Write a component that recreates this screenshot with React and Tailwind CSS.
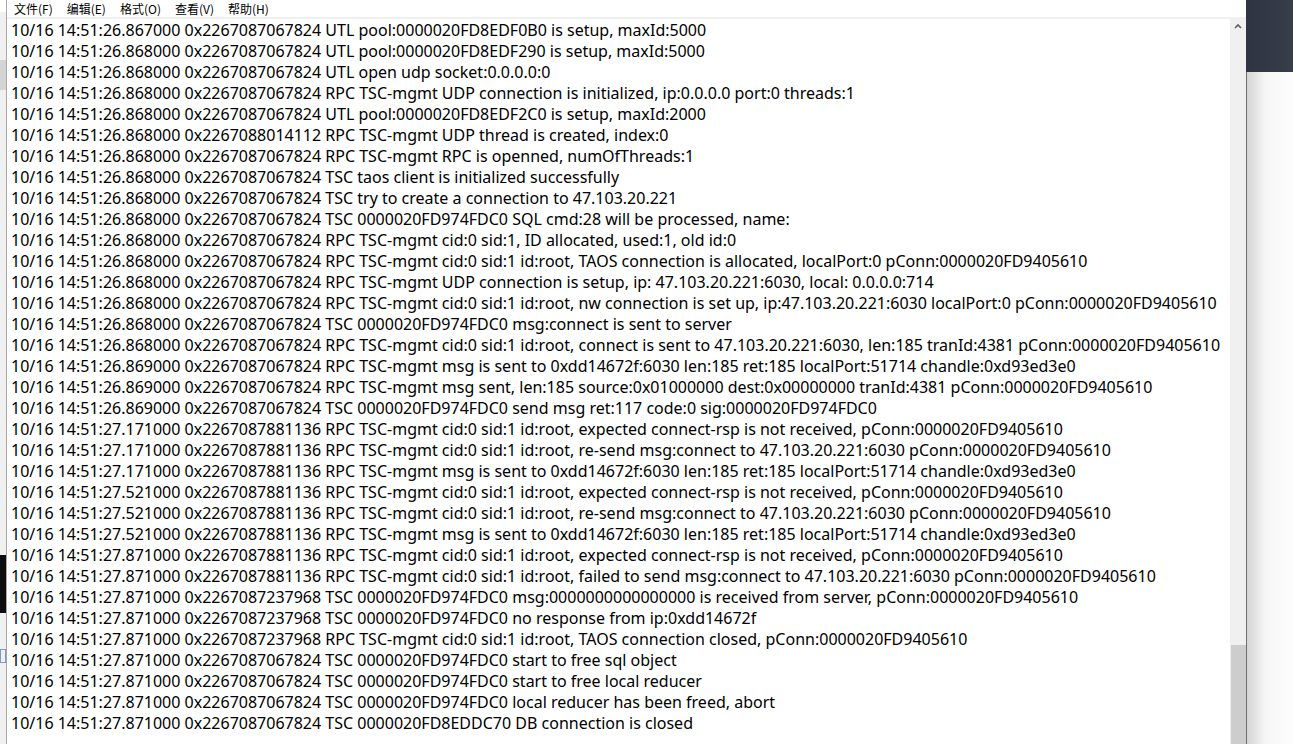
const lines = [
  '10/16 14:51:26.867000 0x2267087067824 UTL pool:0000020FD8EDF0B0 is setup, maxId:5000',
  '10/16 14:51:26.868000 0x2267087067824 UTL pool:0000020FD8EDF290 is setup, maxId:5000',
  '10/16 14:51:26.868000 0x2267087067824 UTL open udp socket:0.0.0.0:0',
  '10/16 14:51:26.868000 0x2267087067824 RPC TSC-mgmt UDP connection is initialized, ip:0.0.0.0 port:0 threads:1',
  '10/16 14:51:26.868000 0x2267087067824 UTL pool:0000020FD8EDF2C0 is setup, maxId:2000',
  '10/16 14:51:26.868000 0x2267088014112 RPC TSC-mgmt UDP thread is created, index:0',
  '10/16 14:51:26.868000 0x2267087067824 RPC TSC-mgmt RPC is openned, numOfThreads:1',
  '10/16 14:51:26.868000 0x2267087067824 TSC taos client is initialized successfully',
  '10/16 14:51:26.868000 0x2267087067824 TSC try to create a connection to 47.103.20.221',
  '10/16 14:51:26.868000 0x2267087067824 TSC 0000020FD974FDC0 SQL cmd:28 will be processed, name:',
  '10/16 14:51:26.868000 0x2267087067824 RPC TSC-mgmt cid:0 sid:1, ID allocated, used:1, old id:0',
  '10/16 14:51:26.868000 0x2267087067824 RPC TSC-mgmt cid:0 sid:1 id:root, TAOS connection is allocated, localPort:0 pConn:0000020FD9405610',
  '10/16 14:51:26.868000 0x2267087067824 RPC TSC-mgmt UDP connection is setup, ip: 47.103.20.221:6030, local: 0.0.0.0:714',
  '10/16 14:51:26.868000 0x2267087067824 RPC TSC-mgmt cid:0 sid:1 id:root, nw connection is set up, ip:47.103.20.221:6030 localPort:0 pConn:0000020FD9405610',
  '10/16 14:51:26.868000 0x2267087067824 TSC 0000020FD974FDC0 msg:connect is sent to server',
  '10/16 14:51:26.868000 0x2267087067824 RPC TSC-mgmt cid:0 sid:1 id:root, connect is sent to 47.103.20.221:6030, len:185 tranId:4381 pConn:0000020FD9405610',
  '10/16 14:51:26.869000 0x2267087067824 RPC TSC-mgmt msg is sent to 0xdd14672f:6030 len:185 ret:185 localPort:51714 chandle:0xd93ed3e0',
  '10/16 14:51:26.869000 0x2267087067824 RPC TSC-mgmt msg sent, len:185 source:0x01000000 dest:0x00000000 tranId:4381 pConn:0000020FD9405610',
  '10/16 14:51:26.869000 0x2267087067824 TSC 0000020FD974FDC0 send msg ret:117 code:0 sig:0000020FD974FDC0',
  '10/16 14:51:27.171000 0x2267087881136 RPC TSC-mgmt cid:0 sid:1 id:root, expected connect-rsp is not received, pConn:0000020FD9405610',
  '10/16 14:51:27.171000 0x2267087881136 RPC TSC-mgmt cid:0 sid:1 id:root, re-send msg:connect to 47.103.20.221:6030 pConn:0000020FD9405610',
  '10/16 14:51:27.171000 0x2267087881136 RPC TSC-mgmt msg is sent to 0xdd14672f:6030 len:185 ret:185 localPort:51714 chandle:0xd93ed3e0',
  '10/16 14:51:27.521000 0x2267087881136 RPC TSC-mgmt cid:0 sid:1 id:root, expected connect-rsp is not received, pConn:0000020FD9405610',
  '10/16 14:51:27.521000 0x2267087881136 RPC TSC-mgmt cid:0 sid:1 id:root, re-send msg:connect to 47.103.20.221:6030 pConn:0000020FD9405610',
  '10/16 14:51:27.521000 0x2267087881136 RPC TSC-mgmt msg is sent to 0xdd14672f:6030 len:185 ret:185 localPort:51714 chandle:0xd93ed3e0',
  '10/16 14:51:27.871000 0x2267087881136 RPC TSC-mgmt cid:0 sid:1 id:root, expected connect-rsp is not received, pConn:0000020FD9405610',
  '10/16 14:51:27.871000 0x2267087881136 RPC TSC-mgmt cid:0 sid:1 id:root, failed to send msg:connect to 47.103.20.221:6030 pConn:0000020FD9405610',
  '10/16 14:51:27.871000 0x2267087237968 TSC 0000020FD974FDC0 msg:0000000000000000 is received from server, pConn:0000020FD9405610',
  '10/16 14:51:27.871000 0x2267087237968 TSC 0000020FD974FDC0 no response from ip:0xdd14672f',
  '10/16 14:51:27.871000 0x2267087237968 RPC TSC-mgmt cid:0 sid:1 id:root, TAOS connection closed, pConn:0000020FD9405610',
  '10/16 14:51:27.871000 0x2267087067824 TSC 0000020FD974FDC0 start to free sql object',
  '10/16 14:51:27.871000 0x2267087067824 TSC 0000020FD974FDC0 start to free local reducer',
  '10/16 14:51:27.871000 0x2267087067824 TSC 0000020FD974FDC0 local reducer has been freed, abort',
  '10/16 14:51:27.871000 0x2267087067824 TSC 0000020FD8EDDC70 DB connection is closed',
]

const menus = ['文件(F)', '编辑(E)', '格式(O)', '查看(V)', '帮助(H)']

const App = () => (
  <div className="flex h-[744px] w-[1293px] overflow-hidden bg-white">
    {/* sliver of the window behind */}
    <div className="flex w-[7px] shrink-0 flex-col overflow-hidden border-r border-[#a8a8a8] bg-[#f0f0f0]">
      <div className="h-[12px] bg-white" />
      <div className="mt-[48px] h-[30px] bg-[#d4d4d4]" />
      <div className="mt-[465px] h-[58px] bg-[#0d0d0d]" />
      <div className="mt-[36px] h-[14px] w-[6px] border border-[#7a9cc4]" />
    </div>

    {/* notepad */}
    <div className="flex min-w-0 flex-1 flex-col">
      <div className="flex h-[17px] shrink-0 items-center gap-[14px] pl-[7px] font-['Noto_Sans_CJK_SC',sans-serif] text-[12px] leading-none text-black">
        {menus.map((m) => (
          <span key={m}>{m}</span>
        ))}
      </div>
      <div className="flex min-h-0 flex-1">
        <div className="min-w-0 flex-1 overflow-hidden border-t-2 border-[#f0f0f0] pl-[4px] pt-[1px] font-['Noto_Sans',sans-serif] text-[16px] leading-[21px] text-black">
          {lines.map((l, i) => (
            <div key={i} className="whitespace-pre">
              {l}
            </div>
          ))}
        </div>
        <div className="flex w-[16px] shrink-0 flex-col bg-[#f0f0f0]">
          <div className="flex h-[17px] items-center justify-center">
            <svg width="8" height="6" viewBox="0 0 8 6">
              <path d="M1 5 L4 2 L7 5" stroke="#606060" strokeWidth="1.6" fill="none" />
            </svg>
          </div>
          <div className="flex-1" />
          <div className="mx-auto h-[99px] w-[15px] bg-[#cdcdcd]" />
        </div>
      </div>
    </div>

    {/* desktop / other window */}
    <div className="flex w-[47px] shrink-0 flex-col">
      <div className="h-[72px] bg-gradient-to-r from-[#2f3442] to-[#383d4a]" />
      <div className="flex-1 border-l border-[#6e6e6e] bg-gradient-to-r from-[#d4d4d4] via-[#f6f6f6] via-40% to-[#fdfdfd]" />
    </div>
  </div>
)

export default App
